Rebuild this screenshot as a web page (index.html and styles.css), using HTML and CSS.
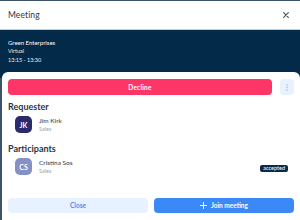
FILE: index.html
```html
<!DOCTYPE html>
<html>
<head>
<meta charset="utf-8">
<link rel="stylesheet" href="styles.css">
</head>
<body>
<div class="modal">
  <div class="head">
    <span class="title">Meeting</span>
    <svg class="x" width="6" height="6" viewBox="0 0 6 6"><path d="M0.7 0.7L5.3 5.3M5.3 0.7L0.7 5.3" stroke="#4a5868" stroke-width="1.2" stroke-linecap="round"/></svg>
  </div>
  <div class="info">
    <div class="company">Green Enterprises</div>
    <div class="sub">Virtual</div>
    <div class="sub">13:15 - 13:30</div>
  </div>
  <div class="content">
    <div class="actions">
      <button class="decline">Decline</button>
      <button class="more"><svg width="2" height="7" viewBox="0 0 2 7"><circle cx="1" cy="1" r="0.8" fill="#9cc0f5"/><circle cx="1" cy="3.5" r="0.8" fill="#9cc0f5"/><circle cx="1" cy="6" r="0.8" fill="#9cc0f5"/></svg></button>
    </div>
    <div class="section">Requester</div>
    <div class="person">
      <div class="avatar dark">JK</div>
      <div class="who"><div class="name">Jim Kirk</div><div class="role">Sales</div></div>
    </div>
    <div class="section">Participants</div>
    <div class="person">
      <div class="avatar light">CS</div>
      <div class="who"><div class="name">Cristina Sos</div><div class="role">Sales</div></div>
      <span class="badge">accepted</span>
    </div>
    <div class="footer">
      <button class="close">Close</button>
      <button class="join"><svg width="7" height="7" viewBox="0 0 7 7"><path d="M3.5 0.5V6.5M0.5 3.5H6.5" stroke="#fff" stroke-width="1" stroke-linecap="round"/></svg>Join meeting</button>
    </div>
  </div>
</div>
</body>
</html>
```
FILE: styles.css
```css
html, body { margin: 0; padding: 0; }
body {
  width: 300px; height: 220px; overflow: hidden;
  background: #3d5369;
  font-family: Lato, "Noto Sans", sans-serif;
}
.modal { margin-top: 1px; height: 219px; display: flex; flex-direction: column; }
.head {
  height: 28px; flex: none; background: #fff; border-bottom: 1px solid #c5ccd4;
  display: flex; align-items: center; justify-content: space-between;
  padding: 0 11px 0 8px;
}
.title { font-size: 8.5px; color: #2b3645; font-weight: 400; letter-spacing: 0.1px; }
.info {
  background: #032b49; color: #fff; padding: 9px 8px 14px;
  display: flex; flex-direction: column; gap: 2px; flex: none;
}
.company { font-size: 6px; line-height: 7px; }
.sub { font-size: 5.5px; line-height: 7px; color: #e6ecf2; }
.content {
  background: #fff; margin: -6px 0 0 2px; border-radius: 6px 6px 0 0;
  padding: 7px 6px 7px 6px; flex: 1; box-sizing: border-box;
  display: flex; flex-direction: column;
}
button { font-family: inherit; border: none; padding: 0; cursor: pointer; }
.actions { display: flex; gap: 8px; height: 16px; }
.decline {
  flex: 1; background: #fe3567; color: #fff; border-radius: 4px;
  font-size: 6.5px; font-weight: 700; letter-spacing: 0.2px;
}
.more {
  width: 14px; background: #e9f1fe; border-radius: 4px;
  display: flex; align-items: center; justify-content: center;
}
.section { font-size: 9px; line-height: 11px; color: #2b3645; font-weight: 700; margin-top: 6px; }
.person { display: flex; align-items: center; padding-left: 7px; margin-top: 4px; gap: 7px; height: 17px; }
.avatar {
  width: 17px; height: 17px; border-radius: 5px; color: #fff;
  font-size: 7px; font-weight: 700; display: flex; align-items: center; justify-content: center;
}
.avatar.dark { background: #2b2a6c; }
.avatar.light { background: #8590c6; }
.who { flex: 1; display: flex; flex-direction: column; gap: 2px; }
.name { font-size: 6.5px; line-height: 7px; color: #2b3645; }
.role { font-size: 5.5px; line-height: 6px; color: #9aa2ad; }
.badge {
  background: #0c2b48; color: #fff; font-size: 5.5px; line-height: 7px;
  padding: 0 3px; border-radius: 2px; margin-right: 6px; margin-top: 4px;
}
.person + .section { margin-top: 10px; }
.footer { margin-top: auto; display: flex; gap: 6px; height: 15px; }
.footer button { flex: 1; border-radius: 4px; font-size: 6.5px; font-weight: 700; display: flex; align-items: center; justify-content: center; gap: 4px; }
.close { background: #e7f1ff; color: #4d8ef2; }
.join { background: #3a89f6; color: #fff; }
```
